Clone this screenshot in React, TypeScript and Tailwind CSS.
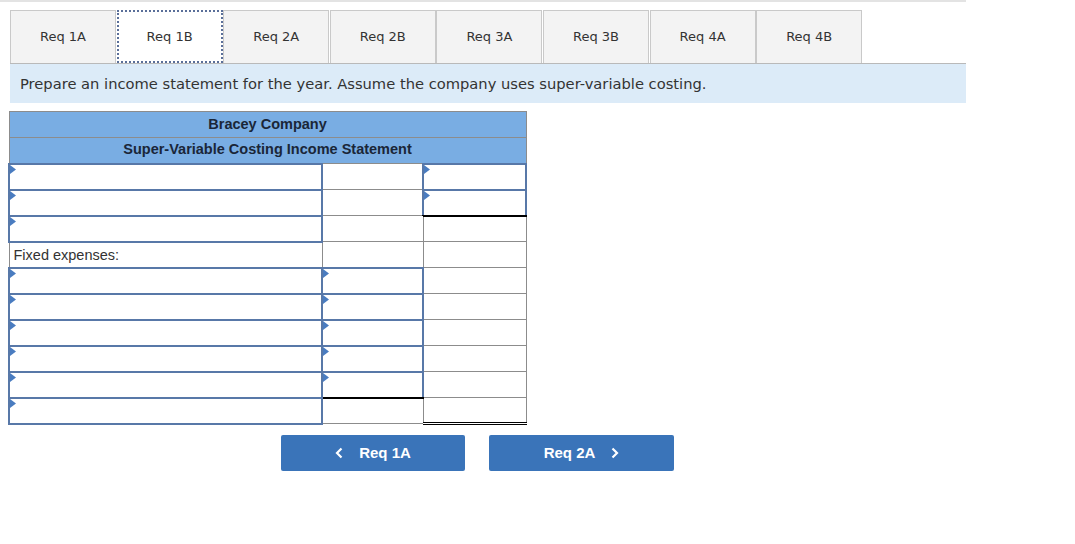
import React from "react";

const TABS = ["Req 1A", "Req 1B", "Req 2A", "Req 2B", "Req 3A", "Req 3B", "Req 4A", "Req 4B"];

type Cell = { input?: boolean; text?: string; bottom?: "single" | "double" };
type Row = [Cell, Cell, Cell];

const ROWS: Row[] = [
  [{ input: true }, {}, { input: true }],
  [{ input: true }, {}, { input: true, bottom: "single" }],
  [{ input: true }, {}, {}],
  [{ text: "Fixed expenses:" }, {}, {}],
  [{ input: true }, { input: true }, {}],
  [{ input: true }, { input: true }, {}],
  [{ input: true }, { input: true }, {}],
  [{ input: true }, { input: true }, {}],
  [{ input: true }, { input: true, bottom: "single" }, {}],
  [{ input: true }, {}, { bottom: "double" }],
];

function Marker() {
  return (
    <svg className="absolute left-0 top-0" width="6" height="9" viewBox="0 0 6 9">
      <path d="M0 0 L6 4.5 L0 9 Z" fill="#4a7cc0" />
    </svg>
  );
}

function Chevron({ dir }: { dir: "left" | "right" }) {
  return (
    <svg width="8" height="12" viewBox="0 0 8 12">
      <path
        d={dir === "left" ? "M6.5 1.5 L2 6 L6.5 10.5" : "M1.5 1.5 L6 6 L1.5 10.5"}
        fill="none"
        stroke="white"
        strokeWidth="2.2"
      />
    </svg>
  );
}

function TableCell({ cell }: { cell: Cell }) {
  let cls = "relative h-[26px] p-0 align-middle ";
  if (cell.input) cls += "border-2 border-[#5878a8] bg-white ";
  else cls += "border border-[#8c8c8c] bg-white ";
  if (cell.bottom === "single") cls += "border-b-2 border-b-black ";
  if (cell.bottom === "double") cls += "border-b-[3px] border-b-black border-double ";
  return (
    <td className={cls}>
      {cell.input && <Marker />}
      {cell.text && <span className="pl-1 text-[14.5px] text-[#333]">{cell.text}</span>}
    </td>
  );
}

export default function App() {
  return (
    <div className="w-[1075px] h-[544px] bg-white font-['Liberation_Sans',Arial,sans-serif]">
      <div className="h-[2px] w-[966px] bg-[#e3e3e3]" />
      <div className="ml-[10px] mt-[8px] w-[956px]">
        <div className="flex h-[53px] items-stretch gap-[0.6px] font-['DejaVu_Sans',Verdana,sans-serif] text-[13px] text-[#333]">
          {TABS.map((t, i) =>
            i === 1 ? (
              <div
                key={t}
                className="flex w-[106px] items-center justify-center border-2 border-dotted border-[#5a6f99] bg-white"
              >
                {t}
              </div>
            ) : (
              <div
                key={t}
                className="flex w-[106px] items-center justify-center border border-b-0 border-[#c9c9c9] bg-[#f3f3f3]"
              >
                {t}
              </div>
            )
          )}
        </div>
        <div className="flex h-[40px] items-center border-t border-[#b9b9b9] bg-[#dcebf8] pl-[10px] pt-[2px] font-['DejaVu_Sans',Verdana,sans-serif] text-[14.7px] text-[#333]">
          Prepare an income statement for the year. Assume the company uses super-variable costing.
        </div>
      </div>

      <table className="ml-[8px] mt-[8px] w-[517px] table-fixed border-collapse">
        <colgroup>
          <col className="w-[313px]" />
          <col className="w-[101px]" />
          <col className="w-[103px]" />
        </colgroup>
        <tbody>
          <tr>
            <td colSpan={3} className="h-[26px] border border-[#8c8c8c] bg-[#79ade3] text-center text-[14.5px] font-bold text-[#1a2638]">
              Bracey Company
            </td>
          </tr>
          <tr>
            <td colSpan={3} className="h-[26px] border border-[#8c8c8c] bg-[#79ade3] text-center text-[14.5px] font-bold text-[#1a2638]">
              Super-Variable Costing Income Statement
            </td>
          </tr>
          {ROWS.map((r, i) => (
            <tr key={i}>
              {r.map((c, j) => (
                <TableCell key={j} cell={c} />
              ))}
            </tr>
          ))}
        </tbody>
      </table>

      <div className="ml-[281px] mt-[10px] flex gap-[24px]">
        <button className="flex h-[36px] w-[184px] items-center justify-center gap-[16px] rounded-[2px] bg-[#3a74b9] text-[15px] font-bold text-white">
          <Chevron dir="left" />
          <span>Req 1A</span>
        </button>
        <button className="flex h-[36px] w-[185px] items-center justify-center gap-[16px] rounded-[2px] bg-[#3a74b9] text-[15px] font-bold text-white">
          <span>Req 2A</span>
          <Chevron dir="right" />
        </button>
      </div>
    </div>
  );
}
